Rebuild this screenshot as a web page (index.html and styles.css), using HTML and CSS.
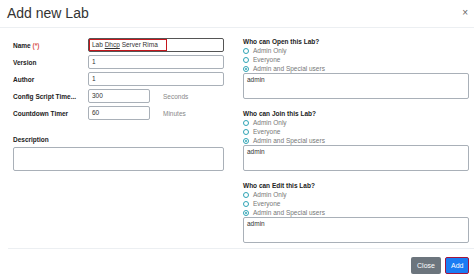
FILE: index.html
```html
<!DOCTYPE html>
<html lang="en">
<head>
    <meta charset="UTF-8">
    <title>Add new Lab</title>
    <link rel="stylesheet" href="styles.css">
</head>
<body>
    <div class="modal">
        <div class="modal-header">
            <h1 class="modal-title">Add new Lab</h1>
            <span class="close">&times;</span>
        </div>

        <div class="modal-body">
            <!-- Lab details -->
            <div class="col-left">
                <div class="row">
                    <label>Name <span class="req">(*)</span></label>
                    <div class="input input-name"><span class="hl">Lab <u>Dhcp</u> Server Rima</span></div>
                </div>
                <div class="row">
                    <label>Version</label>
                    <div class="input">1</div>
                </div>
                <div class="row">
                    <label>Author</label>
                    <div class="input">1</div>
                </div>
                <div class="row row-gap">
                    <label>Config Script Time...</label>
                    <div class="input input-short">300</div>
                    <span class="unit">Seconds</span>
                </div>
                <div class="row">
                    <label>Countdown Timer</label>
                    <div class="input input-short">60</div>
                    <span class="unit">Minutes</span>
                </div>
                <div class="desc-label">Description</div>
                <div class="textarea textarea-desc"></div>
            </div>

            <!-- Permissions -->
            <div class="col-right">
                <div class="perm">
                    <div class="perm-title">Who can Open this Lab?</div>
                    <div class="radio"><span class="dot"></span>Admin Only</div>
                    <div class="radio"><span class="dot"></span>Everyone</div>
                    <div class="radio"><span class="dot checked"></span>Admin and Special users</div>
                    <div class="textarea">admin</div>
                </div>
                <div class="perm">
                    <div class="perm-title">Who can Join this Lab?</div>
                    <div class="radio"><span class="dot"></span>Admin Only</div>
                    <div class="radio"><span class="dot"></span>Everyone</div>
                    <div class="radio"><span class="dot checked"></span>Admin and Special users</div>
                    <div class="textarea">admin</div>
                </div>
                <div class="perm">
                    <div class="perm-title">Who can Edit this Lab?</div>
                    <div class="radio"><span class="dot"></span>Admin Only</div>
                    <div class="radio"><span class="dot"></span>Everyone</div>
                    <div class="radio"><span class="dot checked"></span>Admin and Special users</div>
                    <div class="textarea">admin</div>
                </div>
            </div>
        </div>

        <div class="modal-footer">
            <button class="btn btn-close">Close</button>
            <button class="btn btn-add">Add</button>
        </div>
    </div>
</body>
</html>
```

FILE: styles.css
```css
* {
    margin: 0;
    padding: 0;
    box-sizing: border-box;
    font-family: 'Liberation Sans', Arial, sans-serif;
}

body {
    background: #fff;
    color: #212529;
}

.modal {
    width: 474px;
    height: 278px;
}

.modal-header {
    height: 28px;
    display: flex;
    justify-content: space-between;
    align-items: center;
    padding: 0 6px 2px 7px;
    border-bottom: 1px solid #eceff2;
}

.modal-title {
    font-size: 14px;
    font-weight: 400;
    color: #333;
}

.close {
    font-size: 10px;
    color: #666;
}

.modal-body {
    display: flex;
    gap: 19px;
    padding: 10px 5px 0 13px;
    height: 220px;
}

.col-left {
    width: 211px;
}

.col-right {
    width: 226px;
}

.row {
    display: flex;
    align-items: center;
    height: 14px;
    margin-bottom: 3px;
    font-size: 6.5px;
}

.row-gap {
    margin-top: 2px;
}

.row label {
    width: 75px;
    font-weight: 700;
    color: #222;
}

.req {
    color: #d9534f;
}

.input {
    flex: 1;
    height: 14px;
    border: 1px solid #a9b0b8;
    border-radius: 2px;
    padding: 0 3px;
    font-size: 6.5px;
    line-height: 12px;
    color: #333;
}

.input-name {
    border-color: #555;
    padding: 0;
}

.hl {
    display: inline-block;
    width: 78px;
    height: 12px;
    border: 1.5px solid #c4161c;
    padding-left: 2px;
    line-height: 9px;
}

.input-short {
    flex: 0 0 62px;
}

.unit {
    margin-left: 13px;
    color: #888;
}

.desc-label {
    margin-top: 16px;
    font-size: 6.5px;
    font-weight: 700;
    color: #222;
}

.textarea {
    height: 26px;
    border: 1px solid #a9b0b8;
    border-radius: 2px;
    padding: 2px 3px;
    font-size: 6.5px;
    color: #333;
}

.textarea-desc {
    margin-top: 4px;
    height: 24px;
}

.perm {
    margin-bottom: 11px;
}

.perm-title {
    font-size: 6.5px;
    font-weight: 700;
    color: #222;
    height: 8px;
}

.radio {
    display: flex;
    align-items: center;
    gap: 4px;
    height: 9px;
    font-size: 6.5px;
    color: #777;
}

.dot {
    width: 6px;
    height: 6px;
    border: 1px solid #2fa4b5;
    border-radius: 50%;
    display: flex;
    align-items: center;
    justify-content: center;
}

.dot.checked::after {
    content: '';
    width: 2px;
    height: 2px;
    border-radius: 50%;
    background: #2fa4b5;
}

.modal-footer {
    border-top: 1px solid #eceff2;
    margin-left: 8px;
    height: 30px;
    display: flex;
    justify-content: flex-end;
    align-items: center;
    gap: 4px;
    padding: 4px 5px 0 0;
}

.btn {
    height: 17px;
    border: none;
    border-radius: 2px;
    color: #fff;
    font-size: 7px;
    padding: 0 5px;
}

.btn-close {
    width: 30px;
    background: #6c757d;
}

.btn-add {
    width: 24px;
    background: #1a7cf3;
    border: 1.5px solid #a3143d;
}
```
